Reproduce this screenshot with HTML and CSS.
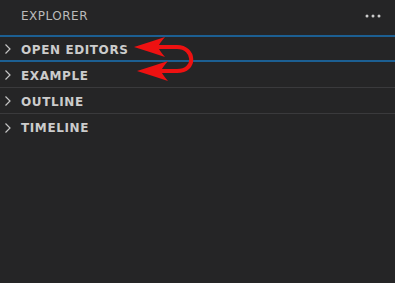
FILE: index.html
```html
<!DOCTYPE html>
<html>
<head>
<meta charset="utf-8">
<link rel="stylesheet" href="styles.css">
</head>
<body>
<div class="explorer">
  <div class="title">
    <span class="title-text">EXPLORER</span>
    <span class="more">
      <svg width="16" height="4" viewBox="0 0 16 4"><circle cx="2" cy="2" r="1.5" fill="#cccccc"/><circle cx="8" cy="2" r="1.5" fill="#cccccc"/><circle cx="14" cy="2" r="1.5" fill="#cccccc"/></svg>
    </span>
  </div>
  <div class="section focused">
    <svg class="chev" width="8" height="12" viewBox="0 0 8 12"><path d="M1.5 1.5 L6 6 L1.5 10.5" fill="none" stroke="#c5c5c5" stroke-width="1.2"/></svg>
    <span class="label">OPEN EDITORS</span>
  </div>
  <div class="section">
    <svg class="chev" width="8" height="12" viewBox="0 0 8 12"><path d="M1.5 1.5 L6 6 L1.5 10.5" fill="none" stroke="#c5c5c5" stroke-width="1.2"/></svg>
    <span class="label">EXAMPLE</span>
  </div>
  <div class="section">
    <svg class="chev" width="8" height="12" viewBox="0 0 8 12"><path d="M1.5 1.5 L6 6 L1.5 10.5" fill="none" stroke="#c5c5c5" stroke-width="1.2"/></svg>
    <span class="label">OUTLINE</span>
  </div>
  <div class="section last">
    <svg class="chev" width="8" height="12" viewBox="0 0 8 12"><path d="M1.5 1.5 L6 6 L1.5 10.5" fill="none" stroke="#c5c5c5" stroke-width="1.2"/></svg>
    <span class="label">TIMELINE</span>
  </div>
  <svg class="annot" width="70" height="45" viewBox="0 0 70 45">
    <path d="M26 12 L47 12 C65 12 67 36 47 36 L29 36" fill="none" stroke="#ee1111" stroke-width="4"/>
    <path d="M4 12 Q20 7 35 2 Q29 9 28 12 Q29 15 35 22 Q20 17 4 12 Z" fill="#ee1111"/>
    <path d="M7 36 Q23 31 38 26 Q32 33 31 36 Q32 39 38 46 Q23 41 7 36 Z" fill="#ee1111"/>
  </svg>
</div>
</body>
</html>
```

FILE: styles.css
```css
html, body {
  margin: 0;
  padding: 0;
  background: #252526;
}
.explorer {
  position: relative;
  width: 395px;
  height: 283px;
  background: #252526;
  font-family: "DejaVu Sans", sans-serif;
  color: #cccccc;
}
.title {
  height: 35px;
  display: flex;
  align-items: center;
  justify-content: space-between;
  padding: 0 14px 0 21px;
  box-sizing: border-box;
}
.title-text {
  font-size: 12px;
  color: #bbbbbb;
  letter-spacing: 0.5px;
  margin-top: -4px;
}
.more {
  display: flex;
  align-items: center;
  margin-top: -4px;
}
.section {
  height: 26px;
  display: flex;
  align-items: center;
  box-sizing: border-box;
  border-bottom: 1px solid #3a3a3c;
  padding-left: 4px;
}
.section.focused {
  border-top: 2px solid #1c5f92;
  border-bottom: 2px solid #1c5f92;
  height: 27px;
}
.section.last {
  border-bottom: none;
}
.chev {
  margin-right: 9px;
  margin-top: 1px;
}
.label {
  font-size: 12px;
  font-weight: 700;
  letter-spacing: 0.6px;
  color: #cccccc;
  margin-top: 2px;
}
.annot {
  position: absolute;
  left: 130px;
  top: 35px;
  overflow: visible;
}
```
